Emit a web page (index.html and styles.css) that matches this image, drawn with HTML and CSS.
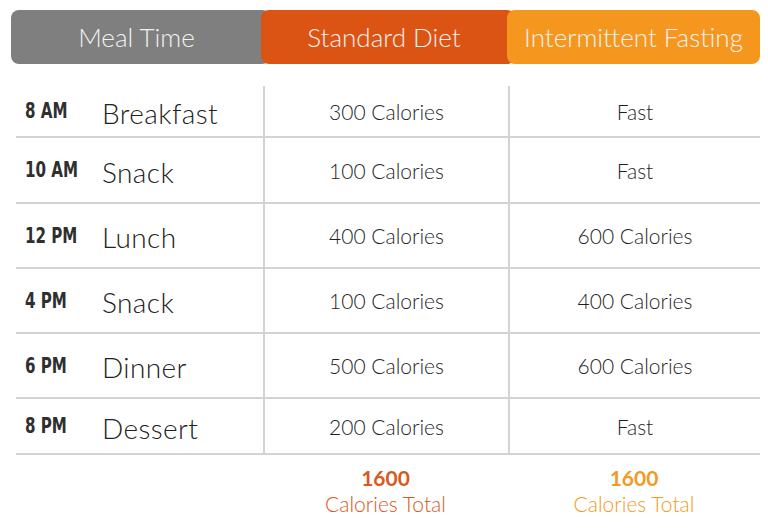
FILE: index.html
```html
<!DOCTYPE html>
<html>
<head>
<meta charset="utf-8">
<link rel="stylesheet" href="styles.css">
</head>
<body>
<div class="page">
  <div class="head">
    <div class="seg seg-gray">Meal Time</div>
    <div class="seg seg-std">Standard Diet</div>
    <div class="seg seg-if">Intermittent Fasting</div>
  </div>
  <div class="table">
    <div class="row r1">
      <div class="meal"><span class="time">8 AM</span><span class="name">Breakfast</span></div>
      <div class="cell">300 Calories</div>
      <div class="cell">Fast</div>
    </div>
    <div class="row r2">
      <div class="meal"><span class="time">10 AM</span><span class="name">Snack</span></div>
      <div class="cell">100 Calories</div>
      <div class="cell">Fast</div>
    </div>
    <div class="row r3">
      <div class="meal"><span class="time">12 PM</span><span class="name">Lunch</span></div>
      <div class="cell">400 Calories</div>
      <div class="cell">600 Calories</div>
    </div>
    <div class="row r4">
      <div class="meal"><span class="time">4 PM</span><span class="name">Snack</span></div>
      <div class="cell">100 Calories</div>
      <div class="cell">400 Calories</div>
    </div>
    <div class="row r5">
      <div class="meal"><span class="time">6 PM</span><span class="name">Dinner</span></div>
      <div class="cell">500 Calories</div>
      <div class="cell">600 Calories</div>
    </div>
    <div class="row r6">
      <div class="meal"><span class="time">8 PM</span><span class="name">Dessert</span></div>
      <div class="cell">200 Calories</div>
      <div class="cell">Fast</div>
    </div>
  </div>
  <div class="totals">
    <div class="total-spacer"></div>
    <div class="total total-std"><strong>1600</strong><span>Calories Total</span></div>
    <div class="total total-if"><strong>1600</strong><span>Calories Total</span></div>
  </div>
</div>
</body>
</html>
```
FILE: styles.css
```css
html, body {
  margin: 0;
  padding: 0;
  background: #ffffff;
}
body {
  font-family: Lato, "Open Sans", sans-serif;
  color: #333333;
}
.page {
  width: 768px;
  height: 528px;
  padding: 10px 0 0 11px;
  box-sizing: border-box;
}
.head {
  display: flex;
  height: 54px;
  width: 749px;
}
.seg {
  display: flex;
  align-items: center;
  justify-content: center;
  border-radius: 8px;
  color: #f2f2f2;
  font-size: 26px;
  font-weight: 300;
  box-sizing: border-box;
  position: relative;
}
.seg-gray {
  background: #7f7f7f;
  width: 259px;
  padding-right: 8px;
  z-index: 1;
}
.seg-std {
  background: #dc5414;
  width: 254px;
  margin-left: -9px;
  padding-right: 8px;
  z-index: 2;
}
.seg-if {
  background: #f5961f;
  width: 253px;
  margin-left: -8px;
  z-index: 3;
}
.table {
  margin: 22px 0 0 5px;
  width: 744px;
}
.row {
  display: grid;
  grid-template-columns: 247px 245px 1fr;
  border-bottom: 2px solid #d3d3d3;
  box-sizing: border-box;
}
.r1 { height: 52px; }
.r2 { height: 66px; }
.r3, .r4, .r5 { height: 65px; }
.r6 { height: 56px; }
.meal {
  display: flex;
  align-items: center;
  padding-left: 9px;
}
.time {
  display: inline-block;
  width: 77px;
  font-family: "DejaVu Sans Condensed", "DejaVu Sans", sans-serif;
  font-weight: bold;
  font-size: 21px;
  color: #2f2f2f;
  transform: scaleX(0.8);
  transform-origin: left center;
}
.name {
  font-size: 28px;
  font-weight: 300;
  letter-spacing: 0.4px;
  color: #222222;
  padding-top: 3px;
}
.cell {
  display: flex;
  align-items: center;
  justify-content: center;
  border-left: 2px solid #d3d3d3;
  font-size: 21px;
  font-weight: 300;
  color: #1f1f1f;
}
.totals {
  display: grid;
  grid-template-columns: 247px 245px 1fr;
  width: 744px;
  margin-left: 5px;
  padding-top: 10px;
}
.total {
  display: flex;
  flex-direction: column;
  align-items: center;
  line-height: 26px;
}
.total strong {
  font-size: 21px;
  font-weight: 700;
}
.total span {
  font-size: 21px;
  font-weight: 300;
}
.total-std { color: #d9581c; }
.total-if { color: #f39a26; }
```
